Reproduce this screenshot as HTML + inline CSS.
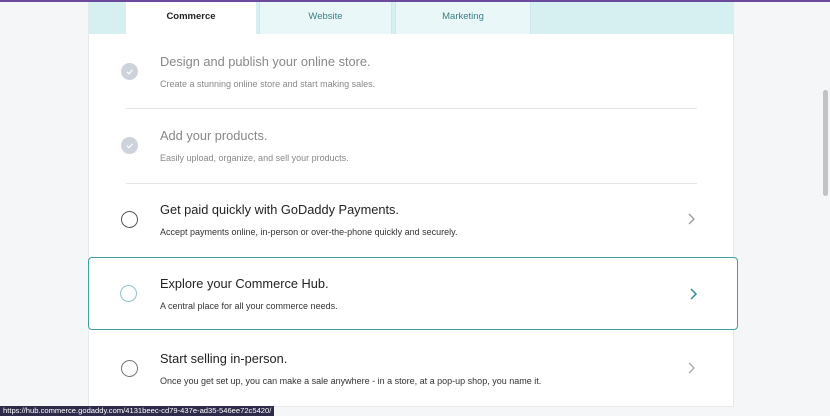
<!DOCTYPE html>
<html><head><meta charset="utf-8"><style>
*{margin:0;padding:0;box-sizing:border-box}
body{width:830px;height:416px;overflow:hidden;background:#f5f6f8;font-family:"Liberation Sans",sans-serif;position:relative}
.top{position:absolute;left:0;top:0;width:830px;height:2px;background:#6b4a9e}
.card{position:absolute;left:88px;top:2px;width:646px;height:405px;background:#fff;border:1px solid #e8e9eb;border-top:none}
.tabs{position:absolute;left:0;top:0;width:645px;height:32px;background:#d6eff1}
.tab{position:absolute;top:0;height:32px;font-size:9.5px;text-align:center;line-height:30px;color:#3c7f86}
.t1{left:37px;width:130px;background:#fff;color:#222;font-weight:bold}
.t2{left:170px;width:133px;background:#e9f7f8;border-left:1px solid #cfe7e9;border-right:1px solid #cfe7e9}
.t3{left:306px;width:136px;background:#e9f7f8;border-left:1px solid #cfe7e9;border-right:1px solid #cfe7e9}
.item{position:absolute;left:0;width:645px}
.h{position:absolute;left:71px;font-size:12.8px;color:#222}
.s{position:absolute;left:71px;font-size:9px;color:#333}
.done .h{color:#888}.done .s{color:#888}
.circ{position:absolute;left:32px;width:17px;height:17px;border-radius:50%;border:1.3px solid #555}
.chk{border:none;background:#ccd3da}
.div{position:absolute;left:37px;width:571px;height:1px;background:#e4e5e7}
.chev{position:absolute;left:596px;width:12px;height:14px}
.sel{position:absolute;left:88px;top:257px;width:650px;height:73px;border:1.5px solid #3e9ea0;border-radius:4px;background:#fff}
.status{position:absolute;left:0;top:406px;height:10px;background:#2d2a4a;color:#fff;font-size:7.6px;line-height:10px;padding:0 3px}
.sb{position:absolute;left:823px;top:90px;width:5px;height:106px;background:#c2c3c5;border-radius:3px}
</style></head><body>
<div class="top"></div>
<div class="card">
 <div class="tabs">
  <div class="tab t1">Commerce</div>
  <div class="tab t2">Website</div>
  <div class="tab t3">Marketing</div>
 </div>
 <div class="item done" style="top:0">
  <div class="circ chk" style="top:61px"><svg width="17" height="17" viewBox="0 0 17 17"><path d="M6 8.8l2 2 3.5-4" stroke="#fff" stroke-width="1.2" fill="none"/></svg></div>
  <div class="h" style="top:52px">Design and publish your online store.</div>
  <div class="s" style="top:77px">Create a stunning online store and start making sales.</div>
 </div>
 <div class="div" style="top:106px"></div>
 <div class="item done">
  <div class="circ chk" style="top:135px"><svg width="17" height="17" viewBox="0 0 17 17"><path d="M6 8.8l2 2 3.5-4" stroke="#fff" stroke-width="1.2" fill="none"/></svg></div>
  <div class="h" style="top:126px">Add your products.</div>
  <div class="s" style="top:151px">Easily upload, organize, and sell your products.</div>
 </div>
 <div class="div" style="top:181px"></div>
 <div class="item">
  <div class="circ" style="top:209px"></div>
  <div class="h" style="top:200px">Get paid quickly with GoDaddy Payments.</div>
  <div class="s" style="top:225px">Accept payments online, in-person or over-the-phone quickly and securely.</div>
  <svg class="chev" style="top:210px" viewBox="0 0 12 14"><path d="M4 2l5 5-5 5" stroke="#999" stroke-width="1.3" fill="none"/></svg>
 </div>
 <div class="item">
  <div class="circ" style="top:358px;border-color:#777"></div>
  <div class="h" style="top:349px">Start selling in-person.</div>
  <div class="s" style="top:374px">Once you get set up, you can make a sale anywhere - in a store, at a pop-up shop, you name it.</div>
  <svg class="chev" style="top:359px" viewBox="0 0 12 14"><path d="M4 2l5 5-5 5" stroke="#aaa" stroke-width="1.3" fill="none"/></svg>
 </div>
</div>
<div class="sel">
 <div style="position:absolute;left:31px;top:27px;width:17px;height:17px;border-radius:50%;border:1.3px solid #8cc6c8"></div>
 <div style="position:absolute;left:71px;top:18px;font-size:12.8px;color:#222">Explore your Commerce Hub.</div>
 <div style="position:absolute;left:71px;top:43px;font-size:9px;color:#333">A central place for all your commerce needs.</div>
 <svg style="position:absolute;left:598px;top:29px;width:12px;height:14px" viewBox="0 0 12 14"><path d="M4 2l5 5-5 5" stroke="#2f8f94" stroke-width="1.5" fill="none"/></svg>
</div>
<div class="sb"></div>
<div class="status">https://hub.commerce.godaddy.com/4131beec-cd79-437e-ad35-546ee72c5420/</div>
</body></html>
